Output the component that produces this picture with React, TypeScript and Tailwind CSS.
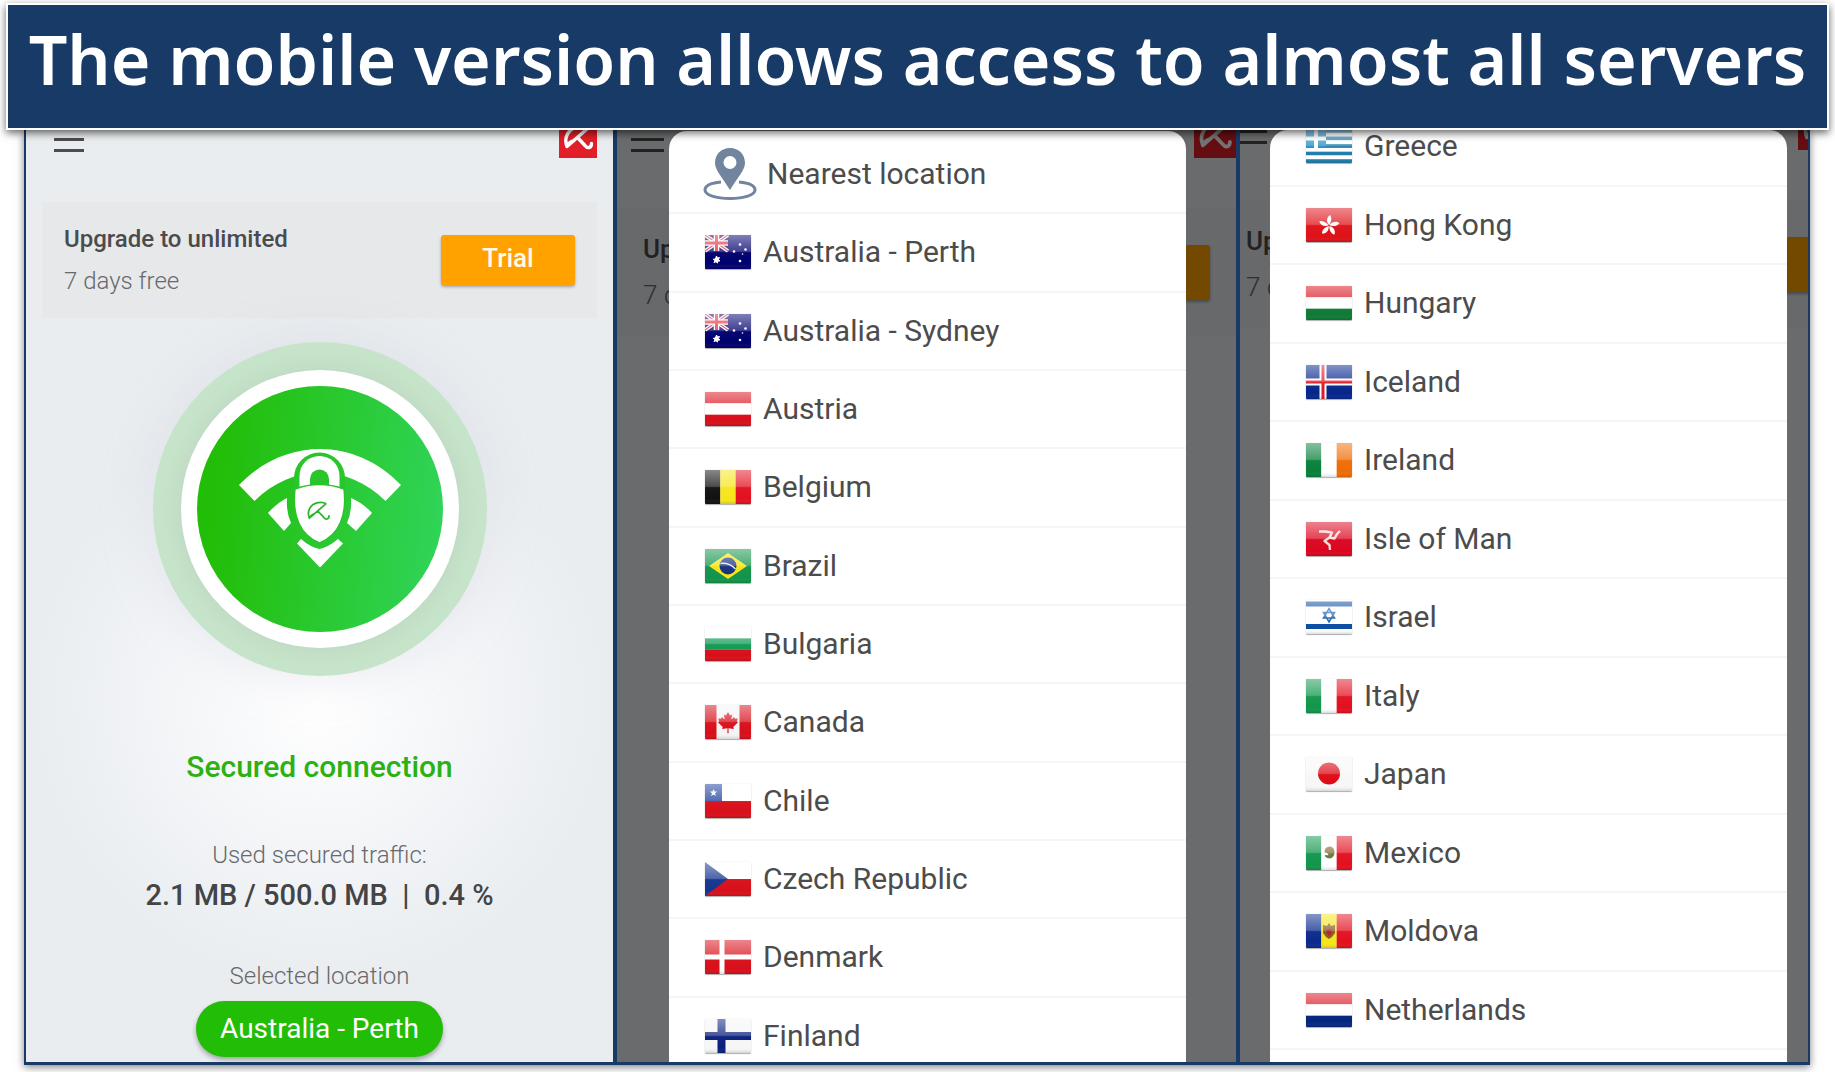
import React from "react";

const F: Record<string, React.ReactNode> = {};

const gloss = (
  <defs>
    <linearGradient id="gloss" x1="0" y1="0" x2="0" y2="1">
      <stop offset="0" stopColor="#fff" stopOpacity="0.5" />
      <stop offset="0.48" stopColor="#fff" stopOpacity="0.25" />
      <stop offset="0.52" stopColor="#fff" stopOpacity="0.03" />
      <stop offset="0.85" stopColor="#fff" stopOpacity="0" />
      <stop offset="1" stopColor="#000" stopOpacity="0.14" />
    </linearGradient>
  </defs>
);

const H = ({ c }: { c: string[] }) => (
  <>
    {c.map((x, i) => (
      <rect key={i} x="0" y={(34 / c.length) * i} width="46" height={34 / c.length + 0.1} fill={x} />
    ))}
  </>
);
const V = ({ c }: { c: string[] }) => (
  <>
    {c.map((x, i) => (
      <rect key={i} y="0" x={(46 / c.length) * i} height="34" width={46 / c.length + 0.1} fill={x} />
    ))}
  </>
);

const red = "#d80f1a";

F.au = (
  <>
    <rect width="46" height="34" fill="#00006e" />
    <path d="M0 0L23 16M23 0L0 16" stroke="#fff" strokeWidth="3.6" />
    <path d="M0 0L23 16M23 0L0 16" stroke="#e4283a" strokeWidth="1.3" />
    <path d="M11.5 0V16M0 8H23" stroke="#fff" strokeWidth="5.5" />
    <path d="M11.5 0V16M0 8H23" stroke="#e4283a" strokeWidth="3" />
    <path d="M11.5 21l1 2 2-.5-1 1.900 1.400 1.600-2.200.1-.2 2.100-1.500-1.500-2 .9.900-2-1.700-1.300 2.200-.3z" fill="#fff" stroke="#fff" />
    <g fill="#fff">
      <circle cx="35" cy="9.500" r="1.300" />
      <circle cx="29" cy="16.500" r="1.300" />
      <circle cx="40.500" cy="14.500" r="1.300" />
      <circle cx="37.500" cy="19" r="0.800" />
      <circle cx="35" cy="26" r="1.300" />
    </g>
  </>
);
F.at = <H c={[red, "#fff", red]} />;
F.be = <V c={["#111", "#f7e51b", "#e3101f"]} />;
F.br = (
  <>
    <rect width="46" height="34" fill="#12934b" />
    <path d="M4 17L23 4L42 17L23 30z" fill="#f6e414" />
    <circle cx="23" cy="17" r="8.500" fill="#16317d" />
    <path d="M15.500 14.500Q24 13.500 30.500 20" stroke="#dfe9f2" strokeWidth="1.500" fill="none" />
  </>
);
F.bg = <H c={["#fff", "#109a55", red]} />;
F.ca = (
  <>
    <rect width="46" height="34" fill="#f4f4f4" />
    <path d="M0 0h11.500v34H0zM34.500 0H46v34H34.500z" fill={red} />
    <path
      d="M23 7l-2 3.500-2.200-1 1 5-3-2.500-.6 1.700-3-.3 1 2.900-1.300 1L17.700 22l-.5 2 5.300-.8-.1 5h1.200l-.1-5 5.300.8-.5-2 4.800-4.700-1.300-1 1-2.900-3 .3-.6-1.700-3 2.500 1-5-2.200 1z"
      fill={red}
    />
  </>
);
F.cl = (
  <>
    <H c={["#fff", red]} />
    <rect width="17" height="17" fill="#1c3f9e" />
    <path d="M8.500 5l1 2.600h2.700l-2.200 1.700.9 2.700-2.400-1.600L6.100 12l.9-2.700-2.200-1.700h2.700z" fill="#fff" />
  </>
);
F.cz = (
  <>
    <H c={["#fff", red]} />
    <path d="M0 0L23 17L0 34z" fill="#14358e" />
  </>
);
F.dk = (
  <>
    <rect width="46" height="34" fill={red} />
    <path d="M17 0V34M0 17H46" stroke="#fff" strokeWidth="5" />
  </>
);
F.fi = (
  <>
    <rect width="46" height="34" fill="#f6f6f6" />
    <path d="M16.500 0V34M0 17H46" stroke="#0a1f7c" strokeWidth="8" />
  </>
);
F.gr = (
  <>
    <H c={["#1f7dab", "#fff", "#1f7dab", "#fff", "#1f7dab", "#fff", "#1f7dab", "#fff", "#1f7dab"]} />
    <rect width="20" height="18.900" fill="#1f8fc8" />
    <path d="M10 0V18.900M0 9.500H20" stroke="#fff" strokeWidth="4" />
  </>
);
F.hk = (
  <>
    <rect width="46" height="34" fill="#de1117" />
    {[0, 72, 144, 216, 288].map((a) => (
      <path key={a} transform={`rotate(${a} 23 17.500)`} d="M23 17C20 14 20.500 9 24 7C26.500 10 25 14.500 23 17z" fill="#fff" />
    ))}
  </>
);
F.hu = <H c={[red, "#fff", "#0f7a36"]} />;
F.is = (
  <>
    <rect width="46" height="34" fill="#06268c" />
    <path d="M17 0V34M0 17H46" stroke="#fff" strokeWidth="7" />
    <path d="M17 0V34M0 17H46" stroke="#df1a26" strokeWidth="3" />
  </>
);
F.ie = <V c={["#09803c", "#fff", "#ef6c05"]} />;
F.im = (
  <>
    <rect width="46" height="34" fill="#dc0520" />
    <path
      d="M23.500 15.500L26 10.500L19 9.500L13 9.500M23.500 15.500L28.500 16.500L31 12L34 9M23.500 15.500L18.500 19L23.500 23L24 28"
      stroke="#f5ded2"
      strokeWidth="2.400"
      strokeLinejoin="round"
      fill="none"
    />
  </>
);
F.il = (
  <>
    <rect width="46" height="34" fill="#fff" />
    <path d="M0 4H46M0 26.500H46" stroke="#0b4da2" strokeWidth="5" />
    <path d="M23 8.500l5.500 9.500h-11zM23 22l5.500-9.500h-11z" fill="none" stroke="#2c68b4" strokeWidth="1.600" />
  </>
);
F.it = <V c={["#12964c", "#fff", "#e3101f"]} />;
F.jp = (
  <>
    <rect width="46" height="34" fill="#f7f7f7" />
    <circle cx="23" cy="16.500" r="11" fill="#dd0a16" />
  </>
);
F.mx = (
  <>
    <V c={["#12964c", "#fff", "#e3101f"]} />
    <path d="M19 13q2-3 5.500-2.500 4.500 1.500 4 7-1 5-5.500 5-3.500-.5-4.500-3.500 3 1 4-.500-1-2-4-2z" fill="#8f7440" />
    <path d="M19.500 19.500q3.500 3 7.500-1" stroke="#4a7d4d" strokeWidth="1.400" fill="none" />
  </>
);
F.md = (
  <>
    <V c={["#0a2a8c", "#f7e51b", "#e3101f"]} />
    <path d="M23 9l2 3 4-1v8l-3 4-3 2-3-2-3-4v-8l4 1z" fill="#8a5a25" />
    <path d="M20.500 15h5v4l-2.500 3-2.500-3z" fill="#b3202a" />
  </>
);
F.nl = <H c={[red, "#fff", "#04267f"]} />;

function Flag({ code }: { code: string }) {
  return (
    <svg
      viewBox="0 0 46 34"
      className="h-[34px] w-[46px] shrink-0 rounded-[1px] shadow-[0_1px_1px_rgba(0,0,0,0.3),0_0_1px_rgba(0,0,0,0.25)]"
      aria-hidden="true"
    >
      {gloss}
      {F[code]}
      <rect width="46" height="34" fill="url(#gloss)" />
    </svg>
  );
}

function Pin() {
  return (
    <svg viewBox="0 0 54 52" className="-mx-0.5 h-[52px] w-[54px] shrink-0" aria-hidden="true">
      <path d="M18 34C7 35 2 38 2 42c0 5 11 8.500 25 8.500S52 47 52 42c0-4-5-7-16-8" fill="none" stroke="#71859f" strokeWidth="3" />
      <path
        fillRule="evenodd"
        d="M27 0C18 0 12 6.500 12 15c0 7 7 14 15 27 8-13 15-20 15-27C42 6.500 36 0 27 0zm0 8a6.500 6.500 0 1 1 0 13 6.500 6.500 0 0 1 0-13z"
        fill="#71859f"
      />
    </svg>
  );
}

function UmbrellaPath({ stroke, width }: { stroke: string; width: number }) {
  return (
    <path
      d="M8 26.500C4.500 18 9 8.500 19 7C23 6.500 26.500 7 28.500 8.500L8 26.500C9.500 23 12 21.500 14.500 21M18.500 17.500L26 25.500C28.500 29 32.500 28 32.500 23.500"
      fill="none"
      stroke={stroke}
      strokeWidth={width}
      strokeLinejoin="round"
      strokeLinecap="round"
    />
  );
}

function Logo({ className }: { className: string }) {
  return (
    <svg viewBox="0 0 38 38" className={`shrink-0 ${className}`} role="img" aria-label="Avira">
      <rect width="38" height="38" fill="#e21e28" />
      <UmbrellaPath stroke="#fff" width={3.4} />
    </svg>
  );
}

function Burger({ className }: { className: string }) {
  return (
    <button aria-label="Menu" className={`mb-1.5 flex flex-col gap-2 ${className}`}>
      <span className="h-[3px] w-full bg-[#4c4c4e]" />
      <span className="h-[3px] w-full bg-[#4c4c4e]" />
      <span className="h-[3px] w-full bg-[#4c4c4e]" />
    </button>
  );
}

function Upgrade({ className, textClass, buttonClass }: { className: string; textClass: string; buttonClass: string }) {
  return (
    <section className={`flex items-center justify-between bg-[#e6e8ea] ${className}`}>
      <div className={`overflow-hidden whitespace-nowrap text-[#4a4b4d] ${textClass}`}>
        <h2 className="font-medium">Upgrade to unlimited</h2>
        <p className="font-light text-[#68696c]">7 days free</p>
      </div>
      <button
        className={`shrink-0 rounded-[3px] bg-[#ffa200] pb-1 text-[26px] font-medium text-[#fffbe8] shadow-[0_2px_3px_rgba(0,0,0,0.3)] ${buttonClass}`}
      >
        Trial
      </button>
    </section>
  );
}

function Shield() {
  return (
    <svg viewBox="0 0 246 246" className="size-[246px]" role="img" aria-label="Connection secured">
      <defs>
        <linearGradient id="disc" x1="0" x2="1" y1="0.450" y2="0.550">
          <stop offset="0.050" stopColor="#22bd06" />
          <stop offset="1" stopColor="#30d458" />
        </linearGradient>
      </defs>
      <circle cx="123" cy="123" r="123" fill="url(#disc)" />
      <path d="M42 99C88 51 158 51 204 99L188.500 115C150 77 96 77 57.500 115z" fill="#fff" />
      <path d="M71 127q9-10 19-15-1 14 4 25l-7 8zM175 127q-9-10-21-15 1 14-4 25l9 8z" fill="#fff" />
      <path d="M97 122V92a25.500 25.500 0 0 1 51 0V122z" fill="#2ac42b" />
      <path d="M102.500 103V90a20 20 0 0 1 40 0V103z" fill="#fff" />
      <path d="M113 100V93a9.500 9.500 0 0 1 19 0v7z" fill="#2ac42b" />
      <path
        d="M98 103Q122.500 94 147 103C150 128 143 149 122.500 157C102 149 95 128 98 103z"
        fill="#fff"
        stroke="#2ac42b"
        strokeWidth="1.500"
      />
      <path d="M104 153q9 8 18.500 10 9-2 18.500-10l5 4.500L123 181.500 100 157.500z" fill="#fff" />
      <g transform="translate(106 111) scale(0.800)">
        <UmbrellaPath stroke="#2ab52b" width={2.2} />
      </g>
    </svg>
  );
}

type Item = [string, string];

const first: Item[] = [
  ["", "Nearest location"],
  ["au", "Australia - Perth"],
  ["au", "Australia - Sydney"],
  ["at", "Austria"],
  ["be", "Belgium"],
  ["br", "Brazil"],
  ["bg", "Bulgaria"],
  ["ca", "Canada"],
  ["cl", "Chile"],
  ["cz", "Czech Republic"],
  ["dk", "Denmark"],
  ["fi", "Finland"],
];
const second: Item[] = [
  ["gr", "Greece"],
  ["hk", "Hong Kong"],
  ["hu", "Hungary"],
  ["is", "Iceland"],
  ["ie", "Ireland"],
  ["im", "Isle of Man"],
  ["il", "Israel"],
  ["it", "Italy"],
  ["jp", "Japan"],
  ["mx", "Mexico"],
  ["md", "Moldova"],
  ["nl", "Netherlands"],
];

function List({ items, className }: { items: Item[]; className: string }) {
  return (
    <ul className={`grid shrink-0 auto-rows-fr ${className}`}>
      {items.map(([code, name]) => (
        <li key={name} className="border-b-2 border-[#f5f5f6]">
          <button className="flex size-full items-center gap-3 pl-9 text-left text-[30px] leading-9 text-[#4c4c4c]">
            {code ? <Flag code={code} /> : <Pin />}
            {name}
          </button>
        </li>
      ))}
    </ul>
  );
}

function Backdrop({ className }: { className: string }) {
  return (
    <div className={`absolute bg-[#e9edf0] ${className}`} aria-hidden="true">
      <div className="flex items-end justify-between pl-3.5">
        <Burger className="w-[33px]" />
        <Logo className="size-[42px]" />
      </div>
      <Upgrade
        className="mt-[50px] h-32 px-[26px]"
        textClass="w-[26px] text-[26px] leading-[46px]"
        buttonClass="h-[55px] w-[145px]"
      />
    </div>
  );
}

export default function App() {
  return (
    <div className="flex min-h-screen flex-col bg-white px-1.5 pb-[7px] pt-[3px] font-['Roboto',sans-serif]">
      <header className="relative z-20 flex h-[127px] items-start justify-center border-2 border-white bg-[#183a67] pt-1.5 shadow-[0_3px_8px_rgba(0,0,0,0.6)]">
        <h1 className="whitespace-nowrap font-['Noto_Sans',sans-serif] text-[68px] font-semibold leading-[96px] text-white">
          The mobile version allows access to almost all servers
        </h1>
      </header>
      <main className="ml-[18px] mr-[19px] grid flex-1 grid-cols-[591fr_623fr_572fr] bg-[#183a67] shadow-[0_2px_8px_rgba(0,0,0,0.5)]">
        <section className="mx-[2px] mb-[3px] flex flex-col items-center overflow-hidden bg-[radial-gradient(circle_at_50%_61%,#fff_0,#f1f3f6_180px,#e9edf0_290px)]">
          <div className="-mt-2.5 flex w-full items-end justify-between pl-7 pr-4">
            <Burger className="w-[30px]" />
            <Logo className="size-[38px]" />
          </div>
          <div className="mt-11 w-full px-4">
            <Upgrade className="h-[116px] px-[22px]" textClass="text-[24px] leading-[42px]" buttonClass="h-[50px] w-[134px]" />
          </div>
          <div className="mt-6 rounded-full bg-[#c6e4c9] p-7 shadow-[0_0_50px_rgba(200,200,215,0.35)]">
            <div className="rounded-full bg-white p-4 shadow-[0_0_20px_rgba(150,150,170,0.2)]">
              <Shield />
            </div>
          </div>
          <p className="mt-[71px] text-[30px] font-medium leading-10 text-[#2cb112]">Secured connection</p>
          <p className="mt-12 text-[24px] font-light leading-10 text-[#68696c]">Used secured traffic:</p>
          <p className="whitespace-pre text-[29px] font-medium leading-10 text-[#434446]">2.1 MB / 500.0 MB  |  0.4 %</p>
          <p className="mt-[41px] text-[24px] font-light leading-10 text-[#68696c]">Selected location</p>
          <button className="mt-[5px] h-14 w-[247px] shrink-0 rounded-full bg-[#22bd06] text-[28px] text-white shadow-[0_3px_5px_rgba(0,0,0,0.3)]">
            Australia - Perth
          </button>
        </section>
        <section className="relative mx-[2px] mb-[3px] overflow-hidden">
          <Backdrop className="inset-x-0 -top-3.5 bottom-0" />
          <div className="relative h-full bg-black/55 pl-[52px] pr-[50px] pt-px">
            <div role="dialog" aria-label="Locations" className="h-0 min-h-full overflow-hidden rounded-t-[18px] bg-white pt-[5px]">
              <List items={first} className="min-h-[940px]" />
            </div>
          </div>
        </section>
        <section className="relative mx-[2px] mb-[3px] overflow-hidden">
          <Backdrop className="-left-5 -right-8 -top-[22px] bottom-0" />
          <div className="relative h-full bg-black/55 pl-[30px] pr-[21px]">
            <div
              role="dialog"
              aria-label="More locations"
              className="flex h-0 min-h-full flex-col justify-end overflow-hidden rounded-t-[18px] bg-white pb-3"
            >
              <List items={second} className="min-h-[942px]" />
            </div>
          </div>
        </section>
      </main>
    </div>
  );
}
